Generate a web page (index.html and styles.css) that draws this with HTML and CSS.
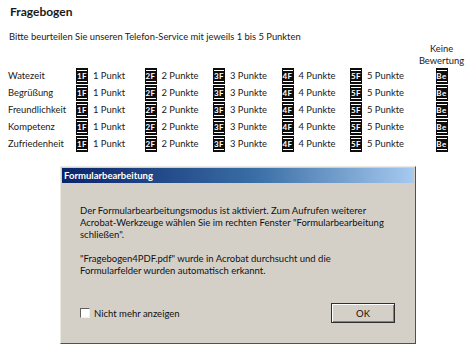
FILE: index.html
```html
<!DOCTYPE html>
<html lang="de">
<head>
<meta charset="utf-8">
<title>Fragebogen</title>
<link rel="stylesheet" href="styles.css">
</head>
<body>
<div class="page">
  <h1 class="title">Fragebogen</h1>
  <p class="intro">Bitte beurteilen Sie unseren Telefon-Service mit jeweils 1 bis 5 Punkten</p>
  <div class="grid">
    <div class="head-spacer"></div>
    <div class="head-none">Keine<br>Bewertung</div>

    <div class="label">Watezeit</div>
    <div class="opt"><span class="fld">1F</span>1 Punkt</div>
    <div class="opt"><span class="fld">2F</span>2 Punkte</div>
    <div class="opt"><span class="fld">3F</span>3 Punkte</div>
    <div class="opt"><span class="fld">4F</span>4 Punkte</div>
    <div class="opt"><span class="fld">5F</span>5 Punkte</div>
    <div class="none"><span class="fld">Be</span></div>

    <div class="label">Begrüßung</div>
    <div class="opt"><span class="fld">1F</span>1 Punkt</div>
    <div class="opt"><span class="fld">2F</span>2 Punkte</div>
    <div class="opt"><span class="fld">3F</span>3 Punkte</div>
    <div class="opt"><span class="fld">4F</span>4 Punkte</div>
    <div class="opt"><span class="fld">5F</span>5 Punkte</div>
    <div class="none"><span class="fld">Be</span></div>

    <div class="label">Freundlichkeit</div>
    <div class="opt"><span class="fld">1F</span>1 Punkt</div>
    <div class="opt"><span class="fld">2F</span>2 Punkte</div>
    <div class="opt"><span class="fld">3F</span>3 Punkte</div>
    <div class="opt"><span class="fld">4F</span>4 Punkte</div>
    <div class="opt"><span class="fld">5F</span>5 Punkte</div>
    <div class="none"><span class="fld">Be</span></div>

    <div class="label">Kompetenz</div>
    <div class="opt"><span class="fld">1F</span>1 Punkt</div>
    <div class="opt"><span class="fld">2F</span>2 Punkte</div>
    <div class="opt"><span class="fld">3F</span>3 Punkte</div>
    <div class="opt"><span class="fld">4F</span>4 Punkte</div>
    <div class="opt"><span class="fld">5F</span>5 Punkte</div>
    <div class="none"><span class="fld">Be</span></div>

    <div class="label">Zufriedenheit</div>
    <div class="opt"><span class="fld">1F</span>1 Punkt</div>
    <div class="opt"><span class="fld">2F</span>2 Punkte</div>
    <div class="opt"><span class="fld">3F</span>3 Punkte</div>
    <div class="opt"><span class="fld">4F</span>4 Punkte</div>
    <div class="opt"><span class="fld">5F</span>5 Punkte</div>
    <div class="none"><span class="fld">Be</span></div>
  </div>

  <div class="dialog">
    <div class="titlebar">Formularbearbeitung</div>
    <div class="dlg-body">
      <p class="msg">Der Formularbearbeitungsmodus ist aktiviert. Zum Aufrufen weiterer<br>Acrobat-Werkzeuge wählen Sie im rechten Fenster "Formularbearbeitung<br>schließen".</p>
      <p class="msg">"Fragebogen4PDF.pdf" wurde in Acrobat durchsucht und die<br>Formularfelder wurden automatisch erkannt.</p>
      <div class="actions">
        <label class="check"><span class="box"></span>Nicht mehr anzeigen</label>
        <button class="ok" type="button">OK</button>
      </div>
    </div>
  </div>
</div>
</body>
</html>
```

FILE: styles.css
```css
html, body {
  margin: 0;
  padding: 0;
  background: #ffffff;
}

body {
  font-family: "Lato", "Open Sans", sans-serif;
  color: #1a1a1a;
  width: 474px;
  height: 359px;
  overflow: hidden;
}

.page {
  padding: 4px 0 0 0;
}

.title {
  margin: 0 0 0 10px;
  font-size: 12px;
  line-height: 16px;
  font-weight: 700;
}

.intro {
  margin: 11px 0 0 9px;
  font-size: 9.4px;
  line-height: 12px;
}

.grid {
  display: grid;
  grid-template-columns: 66px repeat(5, 68.5px) 46px;
  grid-template-rows: 24px;
  grid-auto-rows: 17px;
  margin-left: 10px;
  font-size: 9.4px;
}

.head-spacer {
  grid-column: 1 / 7;
}

.head-none {
  grid-column: 7;
  line-height: 12px;
  text-align: center;
}

.label {
  display: flex;
  align-items: center;
  margin-left: -2px;
}

.opt {
  display: flex;
  align-items: center;
  gap: 5px;
}

.none {
  display: flex;
  align-items: center;
  justify-content: center;
}

.fld {
  position: relative;
  width: 12px;
  height: 16px;
  background: #0d0d0d;
  color: #ffffff;
  font-size: 8px;
  font-weight: 700;
  line-height: 16px;
  text-align: center;
  overflow: hidden;
  letter-spacing: 0.5px;
  flex: none;
}

.fld::before,
.fld::after {
  content: "";
  position: absolute;
  left: 1px;
  right: 1px;
  height: 1px;
  background: #ffffff;
}

.fld::before { top: 2px; }
.fld::after { bottom: 2px; }

.dialog {
  margin: 14px 0 0 60px;
  width: 354px;
  height: 176px;
  border: 1px solid;
  border-color: #ebe9e4 #505050 #505050 #ebe9e4;
  background: #d4d0c8;
}

.titlebar {
  height: 15px;
  margin: 1px;
  background: linear-gradient(to right, #0a246a 0%, #3a6ea5 55%, #a6caf0 100%);
  color: #ffffff;
  font-size: 9.5px;
  font-weight: 700;
  line-height: 15px;
  padding-left: 2px;
}

.dlg-body {
  padding: 21px 19px 0 19px;
  color: #111;
  font-size: 9.5px;
}

.msg {
  margin: 0 0 12px 0;
  line-height: 12px;
}

.actions {
  display: flex;
  justify-content: space-between;
  align-items: center;
  margin-top: 26px;
  height: 20px;
}

.check {
  display: flex;
  align-items: center;
  gap: 4px;
}

.box {
  width: 8px;
  height: 8px;
  background: #ffffff;
  border: 1px solid;
  border-color: #606060 #f0f0f0 #f0f0f0 #606060;
}

.ok {
  width: 64px;
  height: 20px;
  background: #d4d0c8;
  border: 1px solid #303030;
  box-shadow: inset 1px 1px #ffffff, inset -1px -1px #808080;
  font-family: inherit;
  font-size: 9.5px;
  color: #111;
  padding: 0;
  margin-right: 1px;
}
```
